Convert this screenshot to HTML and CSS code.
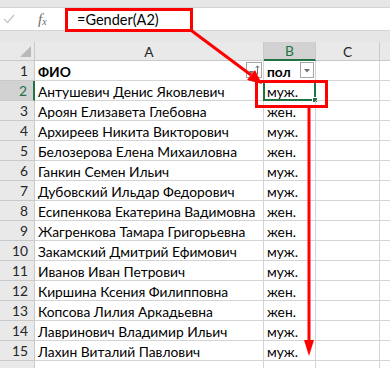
FILE: index.html
```html
<!DOCTYPE html>
<html lang="ru">
<head>
    <meta charset="UTF-8">
    <meta name="viewport" content="width=device-width, initial-scale=1.0">
    <title>Gender</title>
    <link rel="stylesheet" href="styles.css">
</head>
<body>
    <div class="app">
        <div class="top-strip"></div>
        <div class="formula-bar">
            <div class="fb-icons">
                <svg class="check" width="12" height="10" viewBox="0 0 12 10">
                    <path d="M1 5 L4.5 8.5 L11 1" fill="none" stroke="#c6c6c6" stroke-width="1.4"/>
                </svg>
                <span class="fx">f<sub>x</sub></span>
            </div>
            <div class="fb-input">=Gender(A2)</div>
        </div>
        <div class="spacer"></div>

        <div class="sheet">
            <div class="corner"><span class="tri"></span></div>
            <div class="col-head">A</div>
            <div class="col-head selected">B</div>
            <div class="col-head">C</div>
            <div class="col-head rest"></div>

            <div class="row-head">1</div>
            <div class="cell bold">ФИО
                <span class="filter-btn"><svg width="14" height="12" viewBox="0 0 14 12"><path d="M2 7 L7 7 L4.5 10 Z" fill="#707070"/><path d="M10.5 10.5 V2 M8.8 3.8 L10.5 1.8 L12.2 3.8" fill="none" stroke="#707070" stroke-width="1"/></svg></span>
            </div>
            <div class="cell bold">пол
                <span class="filter-btn small"><svg width="12" height="12" viewBox="0 0 12 12"><path d="M3 5 L9 5 L6 8.5 Z" fill="#707070"/></svg></span>
            </div>
            <div class="cell"></div>
            <div class="cell rest"></div>

            <div class="row-head selected">2</div>
            <div class="cell">Антушевич Денис Яковлевич</div>
            <div class="cell active">муж.<span class="handle"></span></div>
            <div class="cell"></div>
            <div class="cell rest"></div>

            <div class="row-head">3</div>
            <div class="cell">Ароян Елизавета Глебовна</div>
            <div class="cell">жен.</div>
            <div class="cell"></div>
            <div class="cell rest"></div>

            <div class="row-head">4</div>
            <div class="cell">Архиреев Никита Викторович</div>
            <div class="cell">муж.</div>
            <div class="cell"></div>
            <div class="cell rest"></div>

            <div class="row-head">5</div>
            <div class="cell">Белозерова Елена Михаиловна</div>
            <div class="cell">жен.</div>
            <div class="cell"></div>
            <div class="cell rest"></div>

            <div class="row-head">6</div>
            <div class="cell">Ганкин Семен Ильич</div>
            <div class="cell">муж.</div>
            <div class="cell"></div>
            <div class="cell rest"></div>

            <div class="row-head">7</div>
            <div class="cell">Дубовский Ильдар Федорович</div>
            <div class="cell">муж.</div>
            <div class="cell"></div>
            <div class="cell rest"></div>

            <div class="row-head">8</div>
            <div class="cell">Есипенкова Екатерина Вадимовна</div>
            <div class="cell">жен.</div>
            <div class="cell"></div>
            <div class="cell rest"></div>

            <div class="row-head">9</div>
            <div class="cell">Жагренкова Тамара Григорьевна</div>
            <div class="cell">жен.</div>
            <div class="cell"></div>
            <div class="cell rest"></div>

            <div class="row-head">10</div>
            <div class="cell">Закамский Дмитрий Ефимович</div>
            <div class="cell">муж.</div>
            <div class="cell"></div>
            <div class="cell rest"></div>

            <div class="row-head">11</div>
            <div class="cell">Иванов Иван Петрович</div>
            <div class="cell">муж.</div>
            <div class="cell"></div>
            <div class="cell rest"></div>

            <div class="row-head">12</div>
            <div class="cell">Киршина Ксения Филипповна</div>
            <div class="cell">жен.</div>
            <div class="cell"></div>
            <div class="cell rest"></div>

            <div class="row-head">13</div>
            <div class="cell">Копсова Лилия Аркадьевна</div>
            <div class="cell">жен.</div>
            <div class="cell"></div>
            <div class="cell rest"></div>

            <div class="row-head">14</div>
            <div class="cell">Лавринович Владимир Ильич</div>
            <div class="cell">муж.</div>
            <div class="cell"></div>
            <div class="cell rest"></div>

            <div class="row-head">15</div>
            <div class="cell">Лахин Виталий Павлович</div>
            <div class="cell">муж.</div>
            <div class="cell"></div>
            <div class="cell rest"></div>

            <div class="row-head"></div>
            <div class="cell"></div>
            <div class="cell"></div>
            <div class="cell"></div>
            <div class="cell rest"></div>
        </div>

        <!-- red annotation marks drawn over the sheet -->
        <svg class="marks" width="390" height="368" viewBox="0 0 390 368">
            <g fill="none" stroke="#ff0000" stroke-width="3">
                <rect x="66.5" y="9.5" width="125" height="21"/>
                <rect x="256.5" y="81.5" width="70" height="25"/>
                <line x1="192" y1="31" x2="251" y2="75"/>
                <line x1="309" y1="108" x2="309" y2="342"/>
            </g>
            <g fill="#ff0000">
                <polygon points="262,84 247,80 255,70"/>
                <polygon points="304,340 314,340 309,356"/>
            </g>
        </svg>
    </div>
</body>
</html>
```

FILE: styles.css
```css
* {
    margin: 0;
    padding: 0;
    box-sizing: border-box;
}

body {
    background: #fff;
    font-family: 'Lato', 'Liberation Sans', sans-serif;
    font-size: 13.8px;
    color: #000;
}

.app {
    position: relative;
    width: 390px;
    height: 368px;
    overflow: hidden;
    background: #e6e6e6;
}

.top-strip {
    height: 7px;
    background: #e6e6e6;
}

.formula-bar {
    display: flex;
    height: 24px;
    background: #fff;
    border-top: 1px solid #d4d4d4;
    border-bottom: 1px solid #d4d4d4;
}

.fb-icons {
    width: 66px;
    display: flex;
    align-items: center;
    padding-left: 3px;
    gap: 23px;
}

.fx {
    font-family: 'Liberation Serif', serif;
    font-style: italic;
    font-size: 15px;
    color: #6d6d6d;
}

.fx sub {
    font-size: 10px;
    vertical-align: -1px;
}

.fb-input {
    flex: 1;
    display: flex;
    align-items: center;
    padding-left: 11px;
    font-size: 14.5px;
}

.spacer {
    height: 11px;
    background: #e6e6e6;
}

.sheet {
    display: grid;
    grid-template-columns: 35px 229px 52px 64px 10px;
    grid-template-rows: 19px;
    grid-auto-rows: 20px;
    background: #fff;
}

.corner,
.col-head,
.row-head {
    background: #e9e9e9;
    border-right: 1px solid #c9c9c9;
    border-bottom: 1px solid #c9c9c9;
    color: #262626;
    display: flex;
    align-items: center;
    justify-content: center;
}

.corner {
    position: relative;
}

.corner .tri {
    position: absolute;
    right: 3px;
    bottom: 3px;
    width: 0;
    height: 0;
    border-left: 11px solid transparent;
    border-bottom: 11px solid #b9b9b9;
}

.col-head.selected {
    background: #d2d2d2;
    color: #217346;
    border-bottom: 2px solid #217346;
}

.col-head.rest {
    border-right: none;
}

.row-head {
    justify-content: flex-end;
    padding-right: 6px;
}

.row-head.selected {
    background: #d2d2d2;
    color: #217346;
    border-right: 2px solid #217346;
}

.cell {
    position: relative;
    border-right: 1px solid #d4d4d4;
    border-bottom: 1px solid #d4d4d4;
    padding-left: 3px;
    padding-top: 1px;
    display: flex;
    align-items: center;
    white-space: nowrap;
}

.cell.rest {
    border-right: none;
    background: #fff;
}

.cell.bold {
    font-weight: bold;
}

.cell.active {
    border: 2px solid #217346;
    margin: -1px 0 0 -1px;
    padding-left: 2px;
}

.handle {
    position: absolute;
    right: -4px;
    bottom: -4px;
    width: 6px;
    height: 6px;
    background: #217346;
    border: 1px solid #fff;
}

.filter-btn {
    position: absolute;
    right: 1px;
    top: 1px;
    width: 16px;
    height: 16px;
    background: #fff;
    border: 1px solid #a6a6a6;
    display: flex;
    align-items: center;
    justify-content: center;
}

.filter-btn.small {
    width: 14px;
}

.marks {
    position: absolute;
    left: 0;
    top: 0;
    pointer-events: none;
}
```
